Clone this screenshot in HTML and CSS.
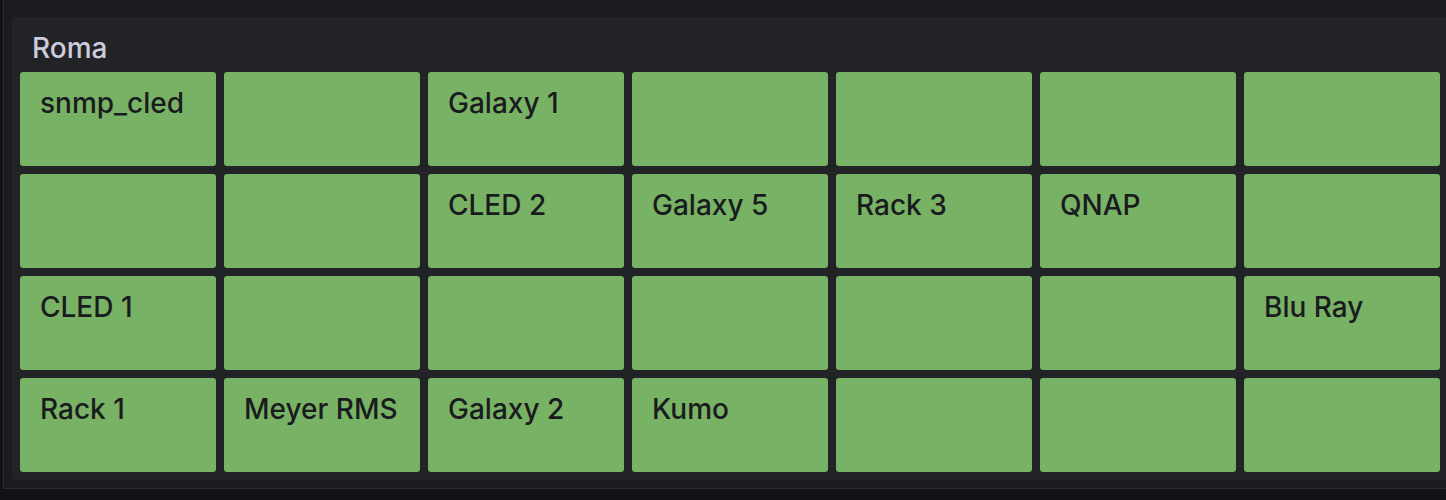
FILE: index.html
```html
<!DOCTYPE html>
<html lang="en">
<head>
<meta charset="utf-8">
<title>Roma</title>
<link rel="stylesheet" href="styles.css">
</head>
<body>
<div class="outer">
  <section class="panel">
    <h2 class="panel-title">Roma</h2>
    <div class="grid">
      <div class="cell">snmp_cled</div>
      <div class="cell"></div>
      <div class="cell">Galaxy 1</div>
      <div class="cell"></div>
      <div class="cell"></div>
      <div class="cell"></div>
      <div class="cell"></div>

      <div class="cell"></div>
      <div class="cell"></div>
      <div class="cell">CLED 2</div>
      <div class="cell">Galaxy 5</div>
      <div class="cell">Rack 3</div>
      <div class="cell">QNAP</div>
      <div class="cell"></div>

      <div class="cell">CLED 1</div>
      <div class="cell"></div>
      <div class="cell"></div>
      <div class="cell"></div>
      <div class="cell"></div>
      <div class="cell"></div>
      <div class="cell">Blu Ray</div>

      <div class="cell">Rack 1</div>
      <div class="cell">Meyer RMS</div>
      <div class="cell">Galaxy 2</div>
      <div class="cell">Kumo</div>
      <div class="cell"></div>
      <div class="cell"></div>
      <div class="cell"></div>
    </div>
  </section>
</div>
</body>
</html>
```
FILE: styles.css
```css
html, body {
  margin: 0;
  padding: 0;
}
body {
  background: #111217;
  width: 1446px;
  height: 500px;
  overflow: hidden;
  font-family: Inter, "Noto Sans", sans-serif;
}
.outer {
  margin-left: 3px;
  margin-top: -10px;
  width: 1470px;
  height: 499px;
  box-sizing: border-box;
  background: #1b1c1f;
  border: 1px solid #2c2d31;
  padding: 26px 8px 0 8px;
}
.panel {
  width: 1436px;
  height: 463px;
  box-sizing: border-box;
  background: #222327;
  border-radius: 4px;
  padding: 0 8px 8px 8px;
}
.panel-title {
  margin: 0;
  height: 55px;
  box-sizing: border-box;
  padding: 14px 0 0 12px;
  font-size: 28px;
  font-weight: 500;
  line-height: normal;
  color: #ccccdc;
}
.grid {
  display: grid;
  grid-template-columns: repeat(7, 196px);
  grid-auto-rows: 94px;
  gap: 8px;
}
.cell {
  background: #78b264;
  border-radius: 3px;
  padding: 14px 20px;
  font-size: 28px;
  font-weight: 500;
  color: #1a1b1e;
  line-height: normal;
  white-space: nowrap;
}
```
